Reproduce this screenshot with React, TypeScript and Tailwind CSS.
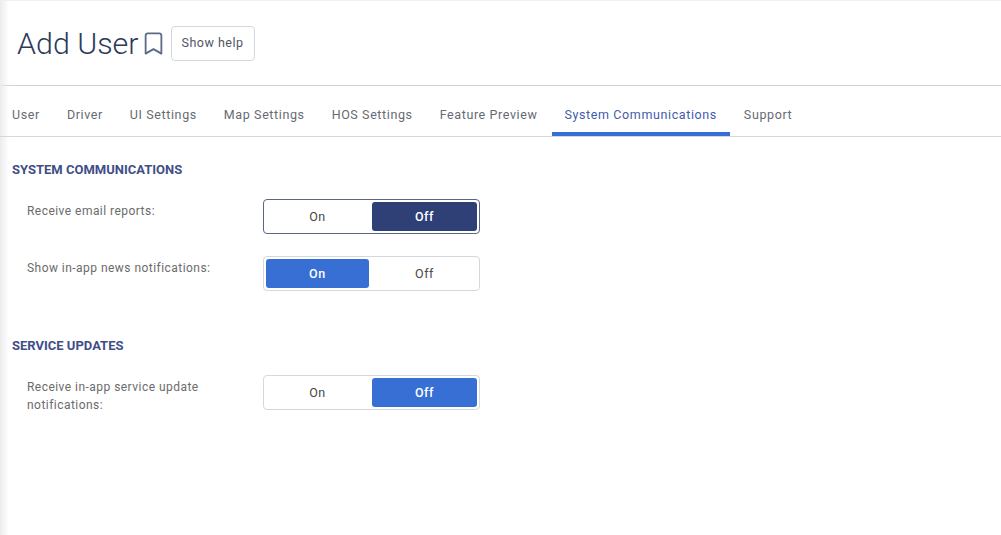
import { Bookmark } from 'lucide-react';

const TABS = ['User', 'Driver', 'UI Settings', 'Map Settings', 'HOS Settings', 'Feature Preview', 'System Communications', 'Support'];

function Toggle({ value, color, focused }: { value: 'On' | 'Off'; color: string; focused?: boolean }) {
  return (
    <div className={`w-[217px] h-[35px] shrink-0 rounded-[4px] border bg-white p-[2px] flex gap-[3px] ${focused ? 'border-[#5b6685]' : 'border-[#d5d7de]'}`}>
      {(['On', 'Off'] as const).map((opt) => (
        <div
          key={opt}
          className={`rounded-[3px] pt-[1px] flex items-center justify-center text-[12.5px] tracking-[0.6px] ${opt === 'On' ? 'w-[103px]' : 'flex-1'} ${opt === value ? `${color} text-white font-medium` : 'text-[#4a4a4a]'}`}
        >
          {opt}
        </div>
      ))}
    </div>
  );
}

function Row({ label, children, className }: { label: React.ReactNode; children: React.ReactNode; className?: string }) {
  return (
    <div className={`flex pl-[27px] ${className ?? ''}`}>
      <div className="w-[236px] pr-[50px] pt-[4px] text-[12px] leading-[17.5px] tracking-[0.46px] text-[#6b6b6b]">{label}</div>
      {children}
    </div>
  );
}

export default function App() {
  return (
    <div className="relative h-[535px] w-[1001px] overflow-hidden bg-white" style={{ fontFamily: 'Roboto, sans-serif' }}>
      {/* left shadow from the nav */}
      <div className="absolute inset-y-0 left-0 w-[9px] bg-gradient-to-r from-[#ececec] to-transparent"></div>

      <header className="h-[86px] border-t border-[#f0f0f4] border-b-[#d3d3d6] border-b flex items-center pl-[17px]">
        <h1 className="text-[30.4px] font-light leading-none text-[#2c3a5c] mt-[2px]">Add User</h1>
        <Bookmark size={27} strokeWidth={1.6} className="ml-[1px] mt-[1px] text-[#5c6a85]" />
        <button className="ml-[4px] h-[35px] w-[84px] rounded-[4px] border border-[#d5d7de] bg-white pt-[1px] text-[12.5px] tracking-[0.5px] text-[#4f5668]">
          Show help
        </button>
      </header>

      <nav className="relative h-[51px] border-b border-[#d8d8dc] flex pl-3 gap-[27px]">
        {TABS.map((tab) => {
          const active = tab === 'System Communications';
          return (
            <div key={tab} className={`relative pt-[21px] text-[12.5px] leading-[15px] tracking-[0.61px] ${active ? 'text-[#3f5cab]' : 'text-[#666a72]'}`}>
              {tab}
              {active && <div className="absolute -left-[13px] -right-[13px] top-[46px] h-[4px] bg-[#376fd4]"></div>}
            </div>
          );
        })}
      </nav>

      <main className="relative">
        <h2 className="ml-3 mt-[25px] text-[13px] leading-[15px] font-bold text-[#3f4e87]">SYSTEM COMMUNICATIONS</h2>
        <Row label="Receive email reports:" className="mt-[22px]">
          <Toggle value="Off" color="bg-[#2f4077]" focused />
        </Row>
        <Row label="Show in-app news notifications:" className="mt-[22px]">
          <Toggle value="On" color="bg-[#376fd4]" />
        </Row>
        <h2 className="ml-3 mt-[47px] text-[13px] leading-[15px] font-bold text-[#3f4e87]">SERVICE UPDATES</h2>
        <Row label={<>Receive in-app service update notifications:</>} className="mt-[22px]">
          <Toggle value="Off" color="bg-[#376fd4]" />
        </Row>
      </main>
    </div>
  );
}
